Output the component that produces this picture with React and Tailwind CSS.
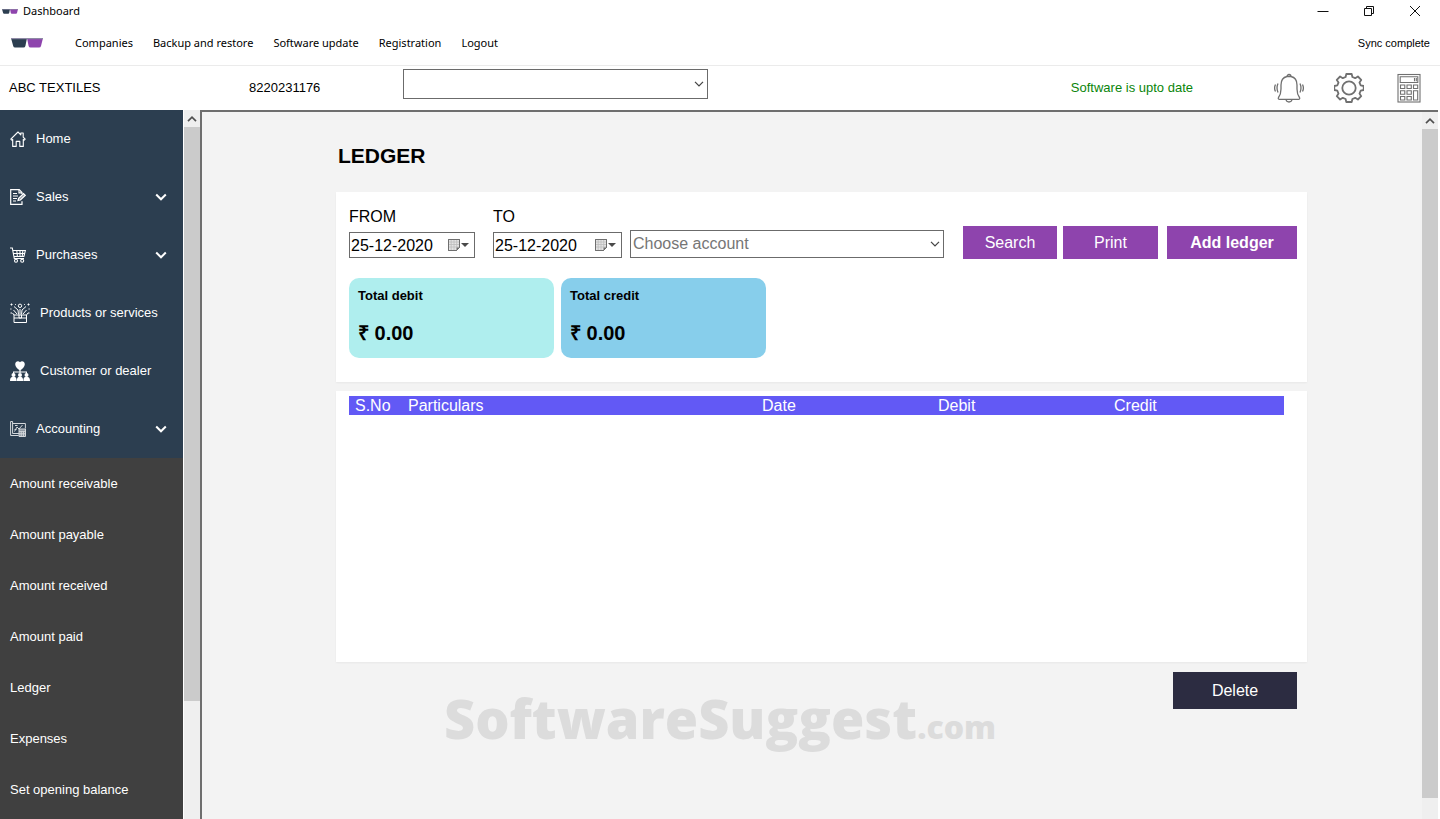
import React from 'react';

const MENU = ['Companies', 'Backup and restore', 'Software update', 'Registration', 'Logout'];

const SUB_MENU = [
    'Amount receivable',
    'Amount payable',
    'Amount received',
    'Amount paid',
    'Ledger',
    'Expenses',
    'Set opening balance',
];

const BrandMark = ({ className }) => (
    <svg viewBox="0 0 32 10" className={className} aria-hidden="true">
        <path d="M0 0h16l-1.600 8q-.3 1.600-2 1.600H4.200q-1.700 0-2-1.600z" fill="#2c3e50" />
        <path d="M16 0h16l-2 8q-.4 1.600-2 1.600h-8.400q-1.700 0-2-1.600z" fill="#8e44ad" />
        <path d="M0 0h32v1.200H0z" fill="#8e8aa5" />
    </svg>
);

const HomeIcon = () => (
    <svg viewBox="0 0 16 16" className="w-4 h-4" fill="none" stroke="currentColor" strokeWidth="1.1" strokeLinejoin="round">
        <path d="M.8 8.200 8 1l2.800 2.800V2h2.400v4.200l2 2-1 1-.9-.8v7H9.800v-5H6.200v5H2.700v-7l-.9.8z" />
    </svg>
);

const SalesIcon = () => (
    <svg viewBox="0 0 16 16" className="w-4 h-4" fill="none" stroke="currentColor" strokeWidth="1.200">
        <path d="M12 5V3.500L9.200.7H.7v14.600H12v-3" />
        <path d="M9 .8v3h3M3 4.500h4M3 7h5M3 9.500h4M3 12h3" />
        <path d="m8 11.500.6-2.300 4.900-4.700 1.800 1.800-4.900 4.700z" fill="currentColor" fillOpacity=".5" />
    </svg>
);

const CartIcon = () => (
    <svg viewBox="0 0 16 16" className="w-4 h-4" fill="none" stroke="currentColor" strokeWidth="1.100">
        <path d="M0 1h2.300l2 10.500H14M2.800 3.500h12.600l-1.500 6H4M3.500 6.500h11M6.800 3.500l.6 6M10 3.500v6M12.900 3.500l-.7 6" />
        <circle cx="6" cy="13.700" r="1.500" />
        <circle cx="12.200" cy="13.700" r="1.500" />
    </svg>
);

const ProductsIcon = () => (
    <svg viewBox="0 0 20 20" className="w-5 h-5" fill="none" stroke="currentColor" strokeWidth="1">
        <path d="M4 12h12.500v7.500H4zM4 15h12.500M9 12v3h2.500v-3" />
        <path d="m4 12-1.500-2M16.500 12l1.500-2M8.500 11.500 8 7l-4-3.500M11.500 11.500 12 7l4-3.500M10 6v5.500M7 11 3.500 7M13 11l3.500-4" />
        <circle cx="10" cy="2.800" r="1.700" />
        <path d="M.5 1.500h2M1.500.5v2M17.500 1.500h2M18.500.5v2M.5 10h1.500M18 10h1.500M.3 6h1.200M18.500 6h1.200M5 1l.8.8M15 1l-.8.8" />
    </svg>
);

const CustomerIcon = () => (
    <svg viewBox="0 0 20 20" className="w-5 h-5" fill="currentColor">
        <path d="M10 9.500C7.500 7.800 5.200 6 5.200 3.300 5.200.3 8.500-.6 10 1.300c1.500-1.900 4.800-1 4.800 2 0 2.700-2.300 4.500-4.800 6.200z" />
        <path d="M9.400 9h1.200v3H9.400zM3 10.500h14v3h-1.100v-1.900H4.100v1.900H3z" />
        <circle cx="3.500" cy="14" r="2" />
        <circle cx="10" cy="14" r="2" />
        <circle cx="16.500" cy="14" r="2" />
        <path d="M0 20c0-3 1-4.200 3.500-4.200S6.600 17 6.600 20zM6.900 20c0-3 .6-4.200 3.100-4.200s3.100 1.200 3.100 4.200zM13.400 20c0-3 .6-4.200 3.100-4.200S20 17 20 20z" />
    </svg>
);

const AccountingIcon = () => (
    <svg viewBox="0 0 16 16" className="w-4 h-4 opacity-80" fill="none" stroke="currentColor" strokeWidth="1">
        <path d="M.6.500h2v12H9M.6.500v14h8M2.600 2.500h12.800v5" />
        <path d="M4.500 10.500 7 6l2 2 3.500-4M5 4.500h2.500M4.500 8.500h2" />
        <path d="M9 8h6.500v7.500H9z" fill="currentColor" fillOpacity=".5" />
        <path d="M9 10.300h6.500M9 12.800h6.500M11.200 10.300v5.200M13.400 10.300v5.200" />
    </svg>
);

const Chevron = ({ className, width = 2 }) => (
    <svg viewBox="0 0 12 8" className={className} fill="none" stroke="currentColor" strokeWidth={width} aria-hidden="true">
        <path d="m1.200 1.500 4.800 4.800 4.800-4.800" />
    </svg>
);

const BellIcon = () => (
    <svg viewBox="0 0 30 30" className="w-[30px] h-[30px]" fill="none" stroke="currentColor" strokeWidth="1.300">
        <path d="M13 3.500a2 2 0 1 1 4 0M13 3.500C8.500 4.500 7 8 7 12v4c0 4-1 6.500-2.500 8.500-.6 1 0 1.800 1 1.800h19c1 0 1.600-.8 1-1.800C24 22.500 23 20 23 16v-4c0-4-1.500-7.500-6-8.500z" />
        <path d="M12 26.500c.5 3.300 5.500 3.300 6 0M4 10.500c-1.300 3-1.300 6 0 9M1.500 11.500c-1.200 2.400-1.200 4.800 0 7M26 10.500c1.300 3 1.300 6 0 9M28.500 11.500c1.200 2.400 1.200 4.800 0 7" />
    </svg>
);

const GearIcon = () => (
    <svg viewBox="0 0 30 30" className="w-[30px] h-[30px]" fill="none" stroke="currentColor" strokeWidth="1.800" strokeLinejoin="round">
        <path d="M12.300 1h5.400l.7 3 2.800 1.200 2.700-1.700 3.300 3.400-1.700 2.700 1.200 2.700 3 .7v4l-3 .7-1.200 2.800 1.700 2.700-3.300 3.300-2.700-1.700-2.800 1.200-.7 3h-5.400l-.7-3-2.800-1.200-2.700 1.700-3.300-3.300 1.700-2.700-1.200-2.800-3-.7v-4l3-.7 1.200-2.700-1.700-2.700 3.300-3.400 2.700 1.700L11.600 4z" />
        <circle cx="15" cy="15" r="6.700" />
    </svg>
);

const CalculatorIcon = () => (
    <svg viewBox="0 0 30 30" className="w-[30px] h-[30px]" fill="none" stroke="currentColor" strokeWidth="1.100">
        <rect x="4" y="1.500" width="22" height="27.500" />
        <path d="M6.200 3.800h17.600v5.700H6.200zM20.500 5v3.200M22.300 5v3.200" />
        <path d="M6.500 12h4.300v3.500H6.500zM13 12h4.300v3.500H13zM19.500 12h4.200v3.500h-4.200zM6.500 17.800h4.300v3.500H6.500zM13 17.800h4.300v3.500H13zM6.500 23.500h4.300V27H6.500zM13 23.500h4.300V27H13zM19.500 17.800h4.200V27h-4.200z" />
    </svg>
);

const CalendarIcon = () => (
    <svg viewBox="0 0 22 12" className="w-[22px] h-3" aria-hidden="true">
        <path d="M.5.5h11v8l-3 3h-8z" fill="#e4e4e4" stroke="#6f6f6f" />
        <path d="M.5 3h11M.5 5.500h11M.5 8h11M3.200.5v11M6 .5v11M8.700.5v8" stroke="#bdbdbd" strokeWidth=".8" />
        <path d="M.5.5h11v8l-3 3h-8z" fill="none" stroke="#6f6f6f" />
        <path d="M11.500 8.500h-3v3z" fill="#6f6f6f" />
        <path d="M13 4h8l-4 4z" fill="#4a4a4a" />
    </svg>
);

const NAV = [
    { label: 'Home', Icon: HomeIcon },
    { label: 'Sales', Icon: SalesIcon, expandable: true },
    { label: 'Purchases', Icon: CartIcon, expandable: true },
    { label: 'Products or services', Icon: ProductsIcon },
    { label: 'Customer or dealer', Icon: CustomerIcon },
    { label: 'Accounting', Icon: AccountingIcon, expandable: true },
];

const ScrollBar = ({ thumb }) => (
    <div className="w-4 shrink-0 flex flex-col bg-[#efefef]" aria-hidden="true">
        <div className="h-[17px] shrink-0 flex items-center justify-center text-[#505050]">
            <Chevron className="w-2.5 h-2 rotate-180" width={2} />
        </div>
        <div className="flex-1">
            <div className={`bg-[#cbcbcb] ${thumb}`} />
        </div>
    </div>
);

const Select = ({ id, label, className, children }) => (
    <div className={`relative ${className}`}>
        <select
            id={id}
            aria-label={label}
            className="w-full h-full appearance-none rounded-none border border-[#6b6b6b] bg-white pl-0.5 text-base leading-5 text-[#767676]"
        >
            {children}
        </select>
        <div className="absolute inset-y-0 right-1 flex items-center text-[#444] pointer-events-none">
            <Chevron className="w-2.5 h-2" width={1.5} />
        </div>
    </div>
);

const DateField = ({ id, label, className }) => (
    <div className={className}>
        <label htmlFor={id} className="block text-base leading-5 mb-[5px]">{label}</label>
        <div className="flex items-center h-[26px] border border-[#6b6b6b] bg-white pl-px pr-1">
            <input id={id} type="text" defaultValue="25-12-2020" className="min-w-0 flex-1 h-6 pt-0.5 text-base leading-5 outline-none" />
            <button type="button" aria-label={`Pick ${label.toLowerCase()} date`}>
                <CalendarIcon />
            </button>
        </div>
    </div>
);

const TotalCard = ({ label, amount, className }) => (
    <div className={`w-[205px] h-20 rounded-[10px] px-[9px] pt-2 ${className}`}>
        <p className="text-[13px] leading-5 font-bold">{label}</p>
        <p className="text-xl leading-7 font-bold mt-[13px]">{amount}</p>
    </div>
);

const Header = () => (
    <header className="shrink-0 bg-white">
        <div className="flex items-center justify-between h-[22px] pl-0.5 pr-[19px]">
            <div className="flex items-center gap-[5px] font-['Noto_Sans',sans-serif]">
                <BrandMark className="w-4 h-[5px]" />
                <span className="text-[11px] leading-4">Dashboard</span>
            </div>
            <div className="flex items-center gap-[34px]">
                <button type="button" aria-label="Minimize">
                    <svg viewBox="0 0 12 12" className="w-3 h-3" stroke="#111" fill="none"><path d="M.5 6.500h11" /></svg>
                </button>
                <button type="button" aria-label="Restore">
                    <svg viewBox="0 0 12 12" className="w-3 h-3" stroke="#111" fill="none"><path d="M1.500 3.500h7v7h-7zM3.500 3.500v-2h7v7h-2" /></svg>
                </button>
                <button type="button" aria-label="Close">
                    <svg viewBox="0 0 12 12" className="w-3 h-3" stroke="#111" fill="none"><path d="m1 1 10 10M11 1 1 11" /></svg>
                </button>
            </div>
        </div>

        <div className="flex items-center h-11 pb-0.5 pl-[11px] pr-2.5 border-b border-[#ebebeb]">
            <BrandMark className="w-8 h-2.5" />
            <nav className="flex items-center gap-5 ml-8 font-['Noto_Sans',sans-serif]">
                {MENU.map((item) => (
                    <a key={item} href="#" className="text-[11px] leading-4">{item}</a>
                ))}
            </nav>
            <span className="ml-auto text-[11px] leading-4">Sync complete</span>
        </div>

        <div className="flex items-center h-11 pl-[9px] pr-4 text-[13px] leading-5">
            <span className="w-60">ABC TEXTILES</span>
            <span className="w-[154px]">8220231176</span>
            <Select id="company" label="Company" className="w-[305px] h-[30px] mb-2">
                <option></option>
            </Select>
            <span className="ml-auto text-[#0a850a]">Software is upto date</span>
            <div className="flex items-center gap-[30px] ml-[81px] text-[#707070]">
                <button type="button" aria-label="Notifications"><BellIcon /></button>
                <button type="button" aria-label="Settings"><GearIcon /></button>
                <button type="button" aria-label="Calculator"><CalculatorIcon /></button>
            </div>
        </div>
    </header>
);

const Sidebar = () => (
    <aside className="flex shrink-0">
        <nav className="w-[183px] mr-px overflow-hidden bg-[#404040] text-white text-[13px] leading-5">
            <div className="bg-[#2c3e50]">
                {NAV.map(({ label, Icon, expandable }) => (
                    <button key={label} type="button" className="flex items-center gap-2.5 w-full h-[58px] pl-2.5 pr-4 text-left">
                        <Icon />
                        <span className="flex-1 whitespace-nowrap">{label}</span>
                        {expandable && <Chevron className="w-3 h-2" />}
                    </button>
                ))}
            </div>
            {SUB_MENU.map((item) => (
                <a key={item} href="#" className="flex items-center h-[51px] pl-2.5">{item}</a>
            ))}
        </nav>
        <ScrollBar thumb="h-[83%]" />
    </aside>
);

const Ledger = () => (
    <main className="flex-1 min-w-0 pl-[134px] pr-[115px] pt-8">
        <h1 className="text-[21px] leading-6 font-bold pl-0.5">LEDGER</h1>

        <section className="mt-6 bg-white shadow-xs pt-[15px] pb-6 pl-[13px] pr-2.5">
            <div className="flex items-end">
                <div className="flex flex-1 items-end pb-px">
                    <DateField id="from" label="FROM" className="w-[126px] mr-[18px]" />
                    <DateField id="to" label="TO" className="w-[129px] mr-2" />
                    <Select id="account" label="Account" className="flex-1 h-7 mr-[19px]">
                        <option>Choose account</option>
                    </Select>
                </div>
                <div className="flex text-base leading-5 text-white">
                    <button type="button" className="w-[94px] h-[33px] bg-[#8e44ad]">Search</button>
                    <button type="button" className="w-[95px] h-[33px] ml-1.5 bg-[#8e44ad]">Print</button>
                    <button type="button" className="w-[130px] h-[33px] ml-[9px] bg-[#8e44ad] font-bold">Add ledger</button>
                </div>
            </div>
            <div className="flex gap-[7px] mt-[19px]">
                <TotalCard label="Total debit" amount="₹ 0.00" className="bg-[#afeeee]" />
                <TotalCard label="Total credit" amount="₹ 0.00" className="bg-[#87ceeb]" />
            </div>
        </section>

        <section className="mt-[9px] min-h-[271px] bg-white shadow-xs pt-[5px] pl-[13px] pr-[23px]">
            <table className="w-full table-fixed text-base text-white">
                <thead>
                    <tr className="bg-[#6259f5] h-[19px] leading-[19px] text-left">
                        <th className="w-[53px] pl-1.5 font-normal">S.No</th>
                        <th className="pl-1.5 font-normal">Particulars</th>
                        <th className="w-[176px] pl-1.5 font-normal">Date</th>
                        <th className="w-[176px] pl-1.5 font-normal">Debit</th>
                        <th className="w-[176px] pl-1.5 font-normal">Credit</th>
                    </tr>
                </thead>
                <tbody></tbody>
            </table>
        </section>

        <div className="flex justify-end mt-2.5 pr-2.5">
            <button type="button" className="w-[124px] h-[37px] bg-[#2c2c41] text-base leading-5 text-white">Delete</button>
        </div>
    </main>
);

export default function App() {
    return (
        <div className="relative flex flex-col h-screen overflow-hidden bg-white text-black font-['Liberation_Sans',Arial,sans-serif]">
            <Header />
            <div className="flex flex-1 min-h-0">
                <Sidebar />
                <div className="flex flex-1 min-w-0 mr-0.5 border-l-2 border-t-2 border-[#6e6e6e] bg-[#f3f3f3]">
                    <Ledger />
                    <ScrollBar thumb="h-[97%]" />
                </div>
            </div>
            <p className="absolute inset-x-0 bottom-[60px] text-center text-[#dcdcdc] text-[54px] leading-[64px] font-extrabold font-['Open_Sans',sans-serif] pointer-events-none">
                SoftwareSuggest<span className="text-[32px]">.com</span>
            </p>
        </div>
    );
}
